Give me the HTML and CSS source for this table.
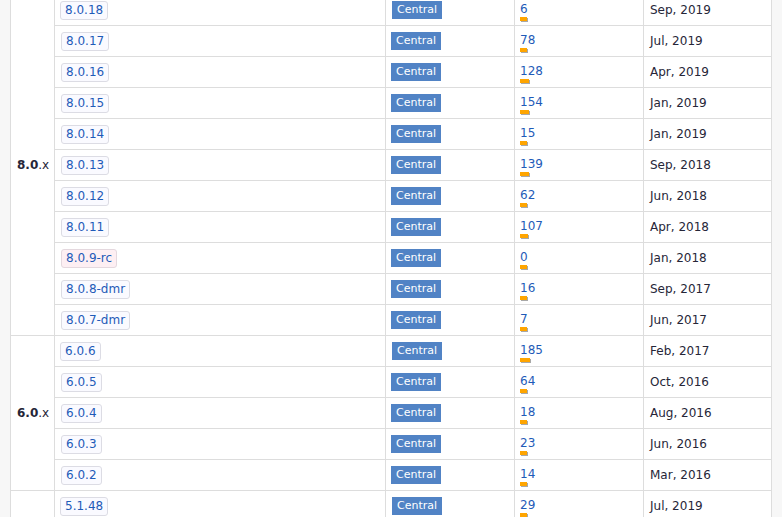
FILE: index.html
```html
<!DOCTYPE html>
<html lang="en">
<head>
  <meta charset="UTF-8" />
  <title>Versions</title>
  <link rel="stylesheet" href="styles.css">
</head>
<body>
  <table class="versions">
    <colgroup>
      <col class="c-group"><col class="c-ver"><col class="c-repo"><col class="c-usage"><col class="c-date">
    </colgroup>
    <tbody>
      <tr>
        <td class="group" rowspan="11"><b>8.0</b>.x</td>
        <td><a class="vbtn">8.0.18</a></td>
        <td><span class="repo">Central</span></td>
        <td class="usage"><a>6</a><span class="rb" style="width:7px"></span></td>
        <td class="date">Sep, 2019</td>
      </tr>
      <tr>
        <td><a class="vbtn">8.0.17</a></td>
        <td><span class="repo">Central</span></td>
        <td class="usage"><a>78</a><span class="rb" style="width:7px"></span></td>
        <td class="date">Jul, 2019</td>
      </tr>
      <tr>
        <td><a class="vbtn">8.0.16</a></td>
        <td><span class="repo">Central</span></td>
        <td class="usage"><a>128</a><span class="rb" style="width:9px"></span></td>
        <td class="date">Apr, 2019</td>
      </tr>
      <tr>
        <td><a class="vbtn">8.0.15</a></td>
        <td><span class="repo">Central</span></td>
        <td class="usage"><a>154</a><span class="rb" style="width:9px"></span></td>
        <td class="date">Jan, 2019</td>
      </tr>
      <tr>
        <td><a class="vbtn">8.0.14</a></td>
        <td><span class="repo">Central</span></td>
        <td class="usage"><a>15</a><span class="rb" style="width:7px"></span></td>
        <td class="date">Jan, 2019</td>
      </tr>
      <tr>
        <td><a class="vbtn">8.0.13</a></td>
        <td><span class="repo">Central</span></td>
        <td class="usage"><a>139</a><span class="rb" style="width:9px"></span></td>
        <td class="date">Sep, 2018</td>
      </tr>
      <tr>
        <td><a class="vbtn">8.0.12</a></td>
        <td><span class="repo">Central</span></td>
        <td class="usage"><a>62</a><span class="rb" style="width:7px"></span></td>
        <td class="date">Jun, 2018</td>
      </tr>
      <tr>
        <td><a class="vbtn">8.0.11</a></td>
        <td><span class="repo">Central</span></td>
        <td class="usage"><a>107</a><span class="rb" style="width:8px"></span></td>
        <td class="date">Apr, 2018</td>
      </tr>
      <tr>
        <td><a class="vbtn rc">8.0.9-rc</a></td>
        <td><span class="repo">Central</span></td>
        <td class="usage"><a>0</a><span class="rb" style="width:7px"></span></td>
        <td class="date">Jan, 2018</td>
      </tr>
      <tr>
        <td><a class="vbtn">8.0.8-dmr</a></td>
        <td><span class="repo">Central</span></td>
        <td class="usage"><a>16</a><span class="rb" style="width:7px"></span></td>
        <td class="date">Sep, 2017</td>
      </tr>
      <tr>
        <td><a class="vbtn">8.0.7-dmr</a></td>
        <td><span class="repo">Central</span></td>
        <td class="usage"><a>7</a><span class="rb" style="width:7px"></span></td>
        <td class="date">Jun, 2017</td>
      </tr>
      <tr>
        <td class="group" rowspan="5"><b>6.0</b>.x</td>
        <td><a class="vbtn">6.0.6</a></td>
        <td><span class="repo">Central</span></td>
        <td class="usage"><a>185</a><span class="rb" style="width:10px"></span></td>
        <td class="date">Feb, 2017</td>
      </tr>
      <tr>
        <td><a class="vbtn">6.0.5</a></td>
        <td><span class="repo">Central</span></td>
        <td class="usage"><a>64</a><span class="rb" style="width:7px"></span></td>
        <td class="date">Oct, 2016</td>
      </tr>
      <tr>
        <td><a class="vbtn">6.0.4</a></td>
        <td><span class="repo">Central</span></td>
        <td class="usage"><a>18</a><span class="rb" style="width:7px"></span></td>
        <td class="date">Aug, 2016</td>
      </tr>
      <tr>
        <td><a class="vbtn">6.0.3</a></td>
        <td><span class="repo">Central</span></td>
        <td class="usage"><a>23</a><span class="rb" style="width:7px"></span></td>
        <td class="date">Jun, 2016</td>
      </tr>
      <tr>
        <td><a class="vbtn">6.0.2</a></td>
        <td><span class="repo">Central</span></td>
        <td class="usage"><a>14</a><span class="rb" style="width:7px"></span></td>
        <td class="date">Mar, 2016</td>
      </tr>
      <tr>
        <td class="group" rowspan="3"><b>5.1</b>.x</td>
        <td><a class="vbtn">5.1.48</a></td>
        <td><span class="repo">Central</span></td>
        <td class="usage"><a>29</a><span class="rb" style="width:7px"></span></td>
        <td class="date">Jul, 2019</td>
      </tr>
      <tr>
        <td><a class="vbtn">5.1.47</a></td>
        <td><span class="repo">Central</span></td>
        <td class="usage"><a>75</a><span class="rb" style="width:7px"></span></td>
        <td class="date">Jun, 2018</td>
      </tr>
      <tr>
        <td><a class="vbtn">5.1.46</a></td>
        <td><span class="repo">Central</span></td>
        <td class="usage"><a>112</a><span class="rb" style="width:8px"></span></td>
        <td class="date">Feb, 2018</td>
      </tr>
    </tbody>
  </table>
</body>
</html>
```

FILE: styles.css
```css
:root {
  --page: #f7f7f7;
  --line: #dddddd;
  --link: #1f5bb8;
  --text: #262638;
  --repo: #5183c5;
  --bar: #ffa500;
}

body {
  margin: 0;
  padding: 0 10px;
  height: 517px;
  background-color: var(--page);
  font-family: "DejaVu Sans", Verdana, sans-serif;
  font-size: 12px;
  color: var(--text);
  overflow: hidden;
}

.versions {
  width: 100%;
  margin-top: -6px;
  border-collapse: collapse;
  table-layout: fixed;
  background-color: #fff;
}

.c-group { width: 44px; }
.c-repo, .c-usage { width: 129px; }
.c-date { width: 128px; }

.versions td {
  height: 31px;
  padding: 0 6px;
  border: 1px solid var(--line);
  vertical-align: middle;
  box-sizing: border-box;
  line-height: 14px;
}

.versions td:nth-child(2), .versions td.group + td {
  padding-left: 5px;
}

.versions td.usage {
  padding-left: 5px;
}

.vbtn {
  display: inline-block;
  padding: 1px 4px 2px;
  line-height: 14px;
  border: 1px solid #dcdce4;
  border-radius: 3px;
  background-color: #fafaff;
  color: var(--link);
}

.vbtn.rc {
  background-color: #fdeff3;
  border-color: #e4d8de;
}

.repo {
  display: inline-block;
  padding: 2px 5px;
  line-height: 14px;
  background-color: var(--repo);
  color: #fff;
  font-size: 11px;
}

.usage a {
  display: block;
  color: var(--link);
  margin-top: 2px;
}

.rb {
  display: block;
  height: 4px;
  margin-top: 1px;
  background-color: var(--bar);
  box-shadow: 1px 1px 0 #a8a8a8;
}

.date {
  color: var(--text);
}
```
